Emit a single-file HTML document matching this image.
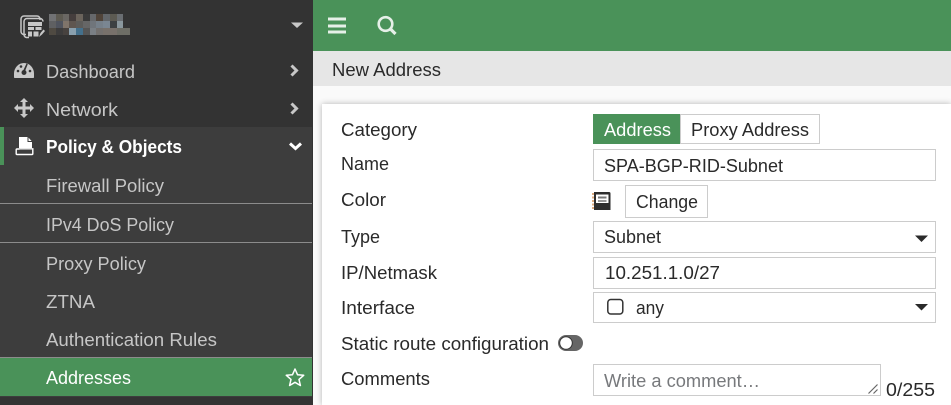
<!DOCTYPE html>
<html><head><meta charset="utf-8"><title>New Address</title>
<style>
html,body{margin:0;padding:0;width:951px;height:405px;overflow:hidden;background:#fafafa}
div{position:absolute;box-sizing:border-box}
#w{left:0;top:0;width:951px;height:405px;overflow:hidden;background:#fafafa}
svg{position:absolute;left:0;top:0}
text{font-family:"Liberation Sans",sans-serif;font-size:18px}
.s{fill:#c6c6c6}.d{fill:#2a2a2a}
.box{background:#fff;border:1px solid #ccc}
</style></head><body>
<div id="w">
<div style="left:0;top:0;width:313px;height:405px;background:#333"></div>
<div style="left:0;top:127px;width:312px;height:270px;background:#3d3d3d"></div>
<div style="left:0;top:127px;width:4px;height:38px;background:#4a9259"></div>
<div style="left:0;top:203px;width:312px;height:1px;background:#8c8c8c"></div>
<div style="left:0;top:242px;width:312px;height:1px;background:#8c8c8c"></div>
<div style="left:0;top:357px;width:312px;height:1px;background:#8c8c8c"></div>
<div style="left:0;top:358px;width:312px;height:38px;background:#4a9259"></div>
<div style="left:313px;top:0;width:638px;height:51px;background:#4a9259"></div>
<div style="left:313px;top:51px;width:638px;height:35px;background:#e6e6e6"></div>
<div style="left:322px;top:104px;width:629px;height:301px;background:#fff;box-shadow:0 0 6px rgba(0,0,0,.28)"></div>

<!-- pixelated name -->
<div style="left:49px;top:14px;width:81px;height:21px;display:grid;grid-template-columns:repeat(12,1fr);grid-template-rows:repeat(3,1fr)">
<i style="background:#717274"></i><i style="background:#5e5b52"></i><i style="background:#6a6763"></i><i style="background:#453e3d"></i><i style="background:#6b645c"></i><i style="background:#3a3a3a"></i><i style="background:#66686b"></i><i style="background:#50443a"></i><i style="background:#62666a"></i><i style="background:#5c5a52"></i><i style="background:#6a6e72"></i><i style="background:#343434"></i>
<i style="background:#5f6062"></i><i style="background:#50545e"></i><i style="background:#7f746a"></i><i style="background:#5f5650"></i><i style="background:#5d5c5a"></i><i style="background:#666"></i><i style="background:#70757b"></i><i style="background:#76808a"></i><i style="background:#7a8692"></i><i style="background:#3c4042"></i><i style="background:#8a979d"></i><i style="background:#343434"></i>
<i style="background:#4f4a42"></i><i style="background:#3d3c3c"></i><i style="background:#47423f"></i><i style="background:#8aa0ae"></i><i style="background:#44708c"></i><i style="background:#555"></i><i style="background:#7a7f84"></i><i style="background:#73706e"></i><i style="background:#78716b"></i><i style="background:#78716b"></i><i style="background:#6e6e66"></i><i style="background:#6e6e66"></i>
</div>

<!-- form controls -->
<div style="left:593px;top:114px;width:88px;height:30px;background:#4a9259"></div>
<div class="box" style="left:680px;top:114px;width:140px;height:30px"></div>
<div class="box" style="left:593px;top:149px;width:343px;height:32px"></div>
<div class="box" style="left:625px;top:185px;width:83px;height:33px"></div>
<div class="box" style="left:593px;top:221px;width:343px;height:32px"></div>
<div class="box" style="left:593px;top:257px;width:343px;height:32px"></div>
<div class="box" style="left:593px;top:292px;width:343px;height:31px"></div>
<div class="box" style="left:593px;top:364px;width:288px;height:32px"></div>

<svg width="951" height="405" viewBox="0 0 951 405">
<!-- firewall icon -->
<g fill="none" stroke="#c8c8c8" stroke-width="1.5">
<path d="M26 34.500h-2a3 3 0 0 1-3-3V19a3 3 0 0 1 3-3h13a3 3 0 0 1 3 3v1"/>
<path d="M29 37.500h-2.500a3 3 0 0 1-2.500-3V21.500a3 3 0 0 1 3-3h13a3 3 0 0 1 3 3"/>
</g>
<path d="M28 22h14v4H28zM28 27h6v3h-6zM35.500 27h6v3h-6zM28 31.500h4v5h-4zM33.500 31.500h5v5h-5z" fill="#c8c8c8"/>
<path d="M39 37l1.500-4 3-3.500 1.500 1.500-3 3.500z" fill="#c8c8c8"/>
<path d="M291 22.500h12l-6 5.500z" fill="#c8c8c8"/>

<!-- dashboard gauge -->
<path d="M14 77.500v-4a10 10.500 0 0 1 20 0v4a1 1 0 0 1-1 .5H15a1 1 0 0 1-1-.5z" fill="#c8c8c8"/>
<g fill="#333"><circle cx="18" cy="71" r="1.300"/><circle cx="21" cy="66.500" r="1.300"/><circle cx="30" cy="71" r="1.300"/><circle cx="24" cy="72.500" r="2.500"/><path d="M23 71l3.500-7.500 1.300.6-3 7.500z"/></g>
<!-- network arrows -->
<path d="M24 98l4 4h-2.500v4.500H30V104l4 4-4 4v-2.500h-4.500V114H28l-4 4-4-4h2.500v-4.500H18v2.500l-4-4 4-4v2.500h4.500V102H20z" fill="#c8c8c8"/>
<!-- policy icon -->
<path d="M19 137h9l4 4.500V148H19z" fill="#fff"/>
<path d="M28 137v4.500h4" fill="none" stroke="#3d3d3d" stroke-width="1"/>
<path d="M19.500 149H17a.8.8 0 0 0-.8.800v4a.8.8 0 0 0 .8.700h15a.8.8 0 0 0 .8-.700v-5H19.500" fill="none" stroke="#fff" stroke-width="1.400"/>
<!-- chevrons -->
<g fill="none" stroke-width="3">
<path d="M291.500 65.500l5 5-5 5" stroke="#c8c8c8"/>
<path d="M291.500 103.500l5 5-5 5" stroke="#c8c8c8"/>
<path d="M290 143.500l5.500 5 5.500-5" stroke="#fff"/>
</g>
<!-- star -->
<path d="M295 369l2.500 5.700 6.200.6-4.700 4.100 1.400 6.100-5.400-3.200-5.400 3.200 1.400-6.100-4.700-4.100 6.200-.6z" fill="none" stroke="#fff" stroke-width="1.500" stroke-linejoin="round"/>
<!-- hamburger -->
<path d="M328 17.500h18v3h-18zM328 24.500h18v3h-18zM328 30.500h18v3h-18z" fill="#e6f0e8"/>
<!-- search -->
<circle cx="385.500" cy="24" r="6.800" fill="none" stroke="#e6f0e8" stroke-width="2.600"/>
<path d="M390.500 29l5 5" stroke="#e6f0e8" stroke-width="3.200"/>
<!-- color icon -->
<path d="M594 192h15a1.500 1.500 0 0 1 1.500 1.500V210H594z" fill="#2e2e2e"/>
<path d="M596 194.500h12.500v8.500H596z" fill="#fff"/>
<path d="M598 196.500h8.500v2h-8.500z" fill="#777"/><path d="M598 200.500h8.500v1h-8.500z" fill="#333"/>
<path d="M593 193v17" stroke="#c9772e" stroke-width="1.200" stroke-dasharray="2 1.500"/>
<!-- carets -->
<path d="M915 235.500h13l-6.500 6.500z" fill="#2a2a2a"/>
<path d="M915 304h13l-6.500 6.500z" fill="#2a2a2a"/>
<!-- checkbox -->
<rect x="607.800" y="299.500" width="15" height="14.500" rx="3" fill="#fff" stroke="#333" stroke-width="1.500"/>
<!-- toggle -->
<rect x="558" y="335" width="25" height="16" rx="8" fill="#666"/>
<circle cx="566" cy="343" r="6.300" fill="#fff" stroke="#333" stroke-width="1"/>
<!-- resize -->
<path d="M868.500 393.500l9-9M873.500 393.500l4-4" stroke="#666" stroke-width="1.200"/>

<!-- sidebar text -->
<text x="46" y="78" class="s" textLength="89" lengthAdjust="spacingAndGlyphs">Dashboard</text>
<text x="46" y="116" class="s" textLength="72" lengthAdjust="spacingAndGlyphs">Network</text>
<text x="46" y="153" fill="#fff" style="font-weight:700" textLength="136" lengthAdjust="spacingAndGlyphs">Policy &amp; Objects</text>
<text x="46" y="192" class="s" textLength="118" lengthAdjust="spacingAndGlyphs">Firewall Policy</text>
<text x="46" y="231" class="s" textLength="128" lengthAdjust="spacingAndGlyphs">IPv4 DoS Policy</text>
<text x="46" y="270" class="s" textLength="100" lengthAdjust="spacingAndGlyphs">Proxy Policy</text>
<text x="46" y="308" class="s" textLength="49" lengthAdjust="spacingAndGlyphs">ZTNA</text>
<text x="46" y="346" class="s" textLength="171" lengthAdjust="spacingAndGlyphs">Authentication Rules</text>
<text x="46" y="384" fill="#fff" textLength="85" lengthAdjust="spacingAndGlyphs">Addresses</text>
<!-- main text -->
<text x="332" y="76" class="d" textLength="109" lengthAdjust="spacingAndGlyphs">New Address</text>
<text x="341" y="136" class="d" textLength="76" lengthAdjust="spacingAndGlyphs">Category</text>
<text x="341" y="170" class="d" textLength="48" lengthAdjust="spacingAndGlyphs">Name</text>
<text x="341" y="206" class="d" textLength="45" lengthAdjust="spacingAndGlyphs">Color</text>
<text x="341" y="243" class="d" textLength="39" lengthAdjust="spacingAndGlyphs">Type</text>
<text x="341" y="279" class="d" textLength="96" lengthAdjust="spacingAndGlyphs">IP/Netmask</text>
<text x="341" y="314" class="d" textLength="74" lengthAdjust="spacingAndGlyphs">Interface</text>
<text x="341" y="350" class="d" textLength="208" lengthAdjust="spacingAndGlyphs">Static route configuration</text>
<text x="341" y="385" class="d" textLength="89" lengthAdjust="spacingAndGlyphs">Comments</text>
<text x="604" y="136" fill="#fff" textLength="67" lengthAdjust="spacingAndGlyphs">Address</text>
<text x="691" y="136" class="d" textLength="118" lengthAdjust="spacingAndGlyphs">Proxy Address</text>
<text x="604" y="172" class="d" textLength="179" lengthAdjust="spacingAndGlyphs">SPA-BGP-RID-Subnet</text>
<text x="636" y="208" class="d" textLength="62" lengthAdjust="spacingAndGlyphs">Change</text>
<text x="604" y="243" class="d" textLength="57" lengthAdjust="spacingAndGlyphs">Subnet</text>
<text x="605" y="279" class="d" textLength="115" lengthAdjust="spacingAndGlyphs">10.251.1.0/27</text>
<text x="636" y="314" class="d" textLength="28" lengthAdjust="spacingAndGlyphs">any</text>
<text x="604" y="387" fill="#77797c" textLength="156" lengthAdjust="spacingAndGlyphs">Write a comment…</text>
<text x="886" y="396" class="d" textLength="49" lengthAdjust="spacingAndGlyphs">0/255</text>
</svg>
</div>
</body></html>
